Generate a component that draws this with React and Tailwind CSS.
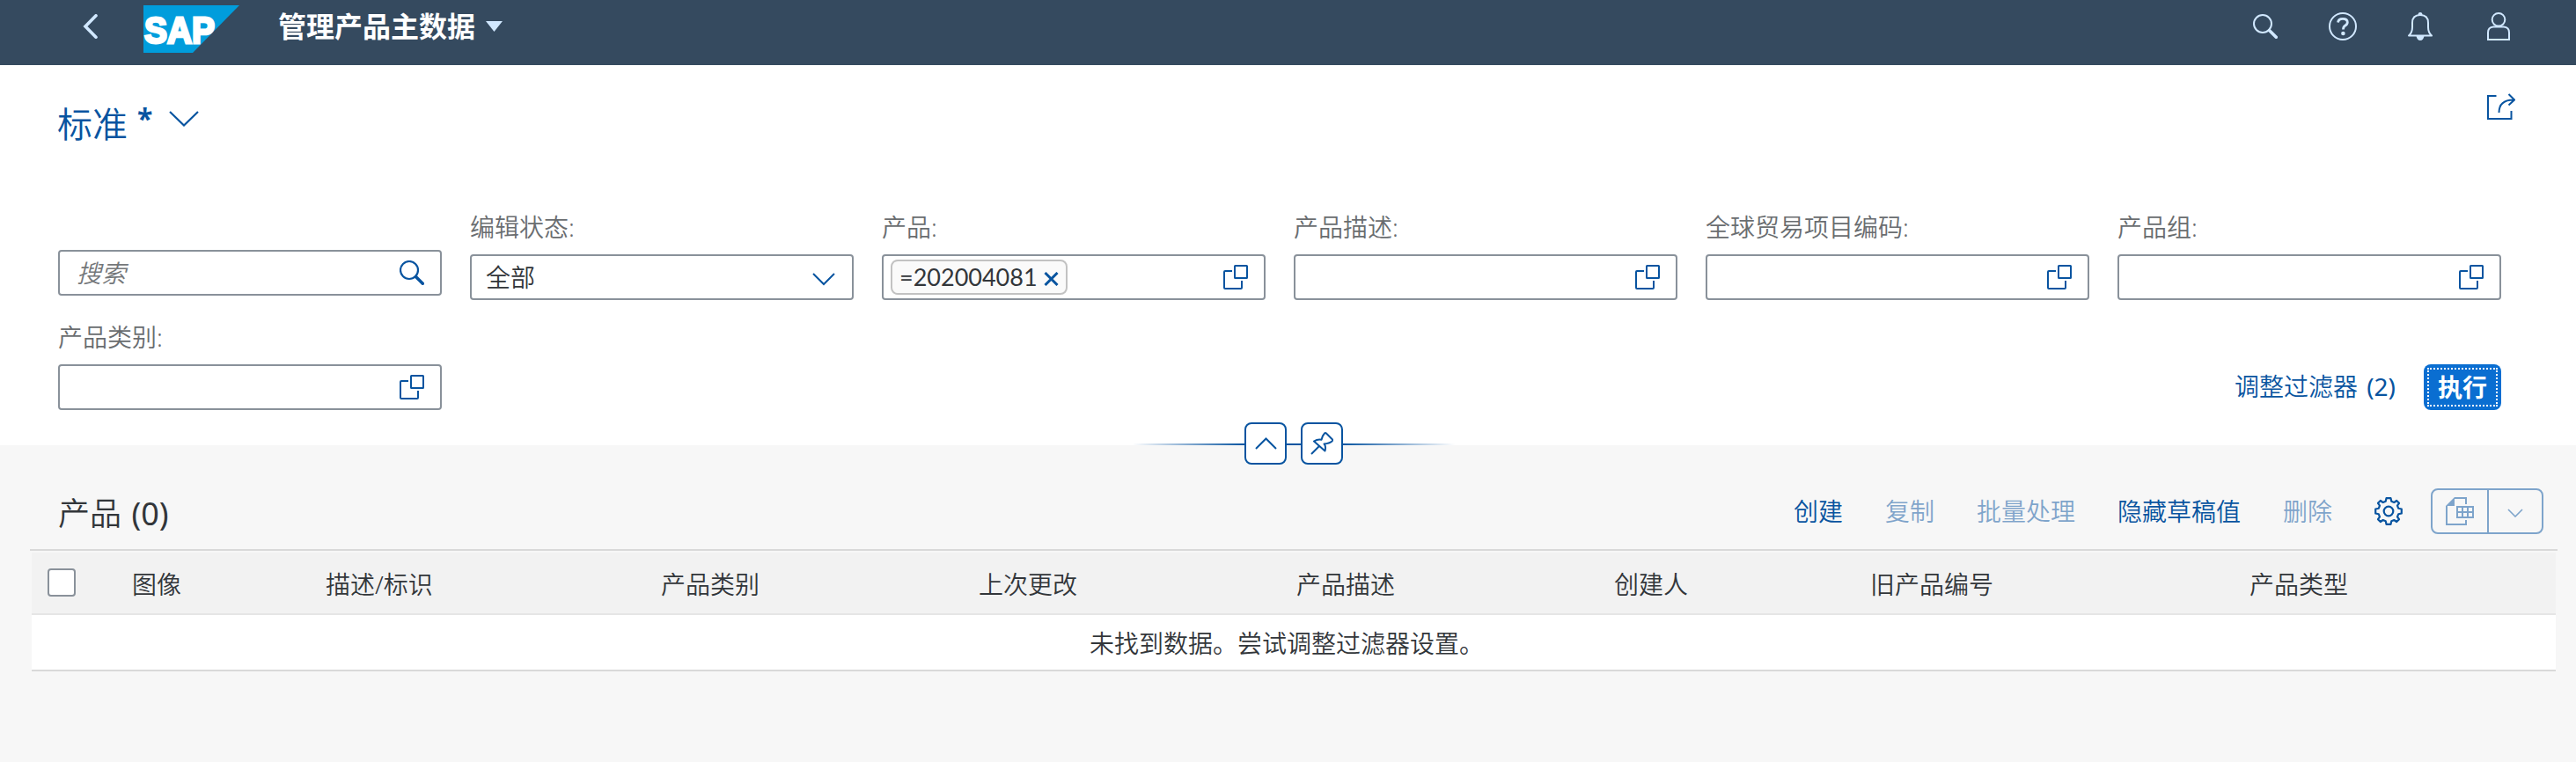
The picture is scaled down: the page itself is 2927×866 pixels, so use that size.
import clsx from 'clsx'

const FILTERS = [
  { label: '产品描述:' },
  { label: '全球贸易项目编码:' },
  { label: '产品组:' },
  { label: '产品类别:' },
]

const COLUMNS = [
  { label: '图像', width: 'w-[220px]' },
  { label: '描述/标识', width: 'w-[381px]' },
  { label: '产品类别', width: 'w-[361px]' },
  { label: '上次更改', width: 'w-[361px]' },
  { label: '产品描述', width: 'w-[361px]' },
  { label: '创建人', width: 'w-[291px]' },
  { label: '旧产品编号', width: 'w-[431px]' },
  { label: '产品类型', width: 'flex-1' },
]

const ACTIONS = [
  { label: '创建', enabled: true },
  { label: '复制', enabled: false },
  { label: '批量处理', enabled: false },
  { label: '隐藏草稿值', enabled: true },
  { label: '删除', enabled: false },
]

function Icon({ className, viewBox = '0 0 32 32', width = 2, children }) {
  return (
    <svg className={clsx('block shrink-0', className)} viewBox={viewBox} fill="none" stroke="currentColor" strokeWidth={width}>
      {children}
    </svg>
  )
}

function SearchIcon({ className, width = 2 }) {
  return (
    <Icon className={className} viewBox="0 0 28 28" width={width}>
      <circle cx="11" cy="11" r="10" />
      <path d="M18.5 18.5L26.3 26.3" strokeWidth="3.6" strokeLinecap="round" />
    </Icon>
  )
}

function ValueHelpIcon() {
  return (
    <Icon className="h-7 w-7" viewBox="0 0 28 28">
      <rect x="13" y="1" width="14" height="14" rx="0.5" />
      <path d="M10 7H2Q1 7 1 8V26Q1 27 2 27H20Q21 27 21 26V18" />
    </Icon>
  )
}

function Logo() {
  return (
    <svg className="block h-[54px] w-[109px]" viewBox="0 0 109 54">
      <path d="M0 0H109L56 54H0Z" fill="#009ddc" />
      <text x="1" y="43" textLength="80" lengthAdjust="spacingAndGlyphs" fill="#fff" stroke="#fff" strokeWidth="3"
        className="font-['Liberation_Sans'] text-[43px] font-bold">SAP</text>
    </svg>
  )
}

function ShellBar() {
  return (
    <header className="flex h-[74px] items-start bg-[#354a5f] text-[#d1e8ff]">
      <Icon className="mt-4 ml-[94px] h-7 w-[17px]" viewBox="0 0 17 28" width={3.6}>
        <path d="M15 1.8L3 14L15 26.2" strokeLinecap="round" />
      </Icon>
      <div className="mt-1.5 ml-[52px]"><Logo /></div>
      <h1 className="ml-11 flex h-[59px] items-center text-[32px] font-bold text-white">管理产品主数据</h1>
      <svg className="mt-6 ml-3 h-3 w-[19px]" viewBox="0 0 19 12" fill="currentColor"><path d="M0 0H19L9.5 12Z" /></svg>
      <div className="mt-3.5 mr-[75px] ml-auto flex items-start">
        <SearchIcon className="mt-0.5 mr-[58px] h-7 w-7" />
        <Icon className="mr-[58px] h-8 w-8">
          <circle cx="16" cy="16" r="15" />
          <path d="M10.5 11.5Q11 7.3 16 7.3Q21.3 7.3 21.3 11.2Q21.3 13.6 18.5 15.3Q16.5 16.5 16.5 19.5" strokeWidth="2.8" />
          <circle cx="16.4" cy="24" r="2.3" fill="currentColor" stroke="none" />
        </Icon>
        <Icon className="mr-[62px] h-8 w-7" viewBox="0 0 28 32">
          <path d="M1 26.5Q5 23 5 17V12Q5 3 14 3Q23 3 23 12V17Q23 23 27 26.5Z" strokeLinejoin="round" />
          <path d="M12.5 3Q12.5 1 14 1Q15.5 1 15.5 3" />
          <path d="M9.5 27Q10.5 32 14 32Q17.5 32 18.5 27Z" fill="currentColor" stroke="none" />
        </Icon>
        <Icon className="h-8 w-[26px]" viewBox="0 0 26 32">
          <circle cx="13" cy="8.3" r="7.3" />
          <path d="M1 31V23Q1 17 7 16.5H19Q25 17 25 23V31Z" />
        </Icon>
      </div>
    </header>
  )
}

function Field({ label, children }) {
  return (
    <div className="flex w-[436px] flex-col">
      <label className="h-[50px] text-[28px] leading-[38px] text-[#6a6d70]">{label}</label>
      <div className="flex h-[52px] items-center rounded-[4px] border-2 border-[#89919a] bg-white pr-[18px] text-[28px] text-[#32363a]">
        {children}
      </div>
    </div>
  )
}

function ValueHelpField({ label, children }) {
  return (
    <Field label={label}>
      {children}
      <span className="ml-auto text-[#0854a0]"><ValueHelpIcon /></span>
    </Field>
  )
}

function FilterBar() {
  return (
    <section className="h-[432px] bg-white px-[66px] text-[#0854a0]">
      <div className="flex h-[165px] items-start">
        <h2 className="mt-[37px] -ml-px text-[40px] leading-[60px]">标准</h2>
        <span className="mt-[37px] ml-[11px] w-[17px] text-[32px] leading-[48px] font-bold">*</span>
        <Icon className="mt-[52px] ml-[19px] h-[18px] w-[34px]" viewBox="0 0 34 18" width={2.2}>
          <path d="M1 1L17 16.5L33 1" />
        </Icon>
        <Icon className="mt-8 mr-[3px] ml-auto h-[30px] w-8" viewBox="0 0 32 30">
          <path d="M10.5 3H1V29H27.5V20" />
          <path d="M13.5 22Q13.5 7.5 30 7.5M24.5 1L31 7.5L24.5 13.5" />
        </Icon>
      </div>
      <div className="grid grid-cols-[repeat(6,436px)] gap-x-8 gap-y-[23px]">
        <div className="mt-[45px] flex h-[52px] items-center rounded-[4px] border-2 border-[#89919a] pr-[18px] pl-[19px]">
          <span className="pb-px text-[28px] text-[#74777a] italic">搜索</span>
          <SearchIcon className="ml-auto h-7 w-7" width={2.2} />
        </div>
        <Field label="编辑状态:">
          <span className="pb-px pl-4">全部</span>
          <Icon className="mt-1 mr-px ml-auto h-[15px] w-[26px] text-[#0854a0]" viewBox="0 0 26 15">
            <path d="M1 1L13 13L25 1" />
          </Icon>
        </Field>
        <ValueHelpField label="产品:">
          <span className="ml-2 flex h-10 w-[201px] items-center rounded-lg border-2 border-[#c2c2c2] bg-[#fafafa] pl-2">
            <span className="font-['Lato',sans-serif] text-[27px] font-normal">=202004081</span>
            <Icon className="mt-1 ml-[7px] h-4 w-[17px] text-[#0854a0]" viewBox="0 0 17 16" width={3}>
              <path d="M1.5 1L15.5 15M15.5 1L1.5 15" />
            </Icon>
          </span>
        </ValueHelpField>
        {FILTERS.map((f) => <ValueHelpField key={f.label} label={f.label} />)}
        <div className="col-span-5 mt-[50px] flex h-[52px] items-center justify-end">
          <button type="button" className="pb-0.5 text-[28px] [word-spacing:3px]">调整过滤器 <span className="font-normal">(2)</span></button>
          <button type="button" className="ml-8 flex h-[52px] w-[88px] rounded-lg bg-[#0a6ed1] p-1 text-[28px] font-bold text-white">
            <span className="flex h-full w-full items-center justify-center border-2 border-dotted border-white">执行</span>
          </button>
        </div>
      </div>
    </section>
  )
}

// Collapse and pin buttons straddle the border between the header and the content.
function HeaderHandle() {
  return (
    <div className="relative z-10 -mt-[26px] -mb-[22px] flex h-12 items-center pl-[1287px] text-[#0854a0]">
      <span className="mt-0.5 h-0.5 w-[127px] bg-linear-to-r from-transparent to-[#0854a0]" />
      <span className="flex h-12 w-12 items-center justify-center rounded-lg border-2 border-[#0854a0] bg-white">
        <Icon className="h-3.5 w-[25px]" viewBox="0 0 25 14">
          <path d="M1 13L12.5 1.5L24 13" />
        </Icon>
      </span>
      <span className="mt-0.5 h-0.5 w-4 bg-[#0854a0]" />
      <span className="flex h-12 w-12 items-center justify-center rounded-lg border-2 border-[#0854a0] bg-white">
        <Icon className="h-[26px] w-[26px]" viewBox="0 0 26 26">
          <path d="M16 1.5Q17 0.5 18 1.5L25 8.5Q25.5 9.5 24.5 10.5Q21.5 13 15.5 13.5Q18 16 16.5 21.5L4 10.5Q8 8 12.5 8.8Q13.5 4 16 1.5Z" strokeLinejoin="round" />
          <path d="M10 16L1 25" />
        </Icon>
      </span>
      <span className="mt-0.5 h-0.5 w-[127px] bg-linear-to-l from-transparent to-[#0854a0]" />
    </div>
  )
}

function Toolbar() {
  return (
    <div className="mr-3.5 ml-[30px] flex h-[118px] items-start text-[28px] text-[#0854a0]">
      <h2 className="mt-[50px] text-[36px] leading-[56px] text-[#32363a] [word-spacing:2px]">产品 <span className="font-normal">(0)</span></h2>
      <div className="mt-[49px] ml-auto flex h-[52px] items-center">
        {ACTIONS.map((a) => (
          <button key={a.label} type="button" className={clsx('mr-12 pb-px', !a.enabled && 'opacity-50')}>{a.label}</button>
        ))}
        <Icon className="mr-8 h-8 w-8" width={2.2}>
          <path d="M13.5 1.2H18.5L19.3 4.8L22.3 6L25.2 4L28 6.8L26 9.7L27.2 12.7L30.8 13.5V18.5L27.2 19.3L26 22.3L28 25.2L25.2 28L22.3 26L19.3 27.2L18.5 30.8H13.5L12.7 27.2L9.7 26L6.8 28L4 25.2L6 22.3L4.8 19.3L1.2 18.5V13.5L4.8 12.7L6 9.7L4 6.8L6.8 4L9.7 6L12.7 4.8Z" strokeLinejoin="round" />
          <circle cx="16" cy="16" r="5.3" />
        </Icon>
        <div className="flex h-[52px] w-32 items-center rounded-lg border-2 border-[#0854a0] opacity-50">
          <span className="flex h-full w-16 items-center justify-center border-r-2 border-[#0854a0]">
            <Icon className="h-8 w-8">
              <path d="M1 10V31H23V26M10 1H23V8" />
              <path d="M0 10L10 0V10Z" fill="currentColor" stroke="none" />
              <path d="M13 11H31V23H13ZM13 17H31M19 11V23M25 11V23" />
            </Icon>
          </span>
          <Icon className="mx-auto mt-1 h-2.5 w-[18px]" viewBox="0 0 18 10" width={1.6}>
            <path d="M1 1L9 9L17 1" />
          </Icon>
        </div>
      </div>
    </div>
  )
}

function ProductTable() {
  return (
    <div className="text-[28px] text-[#32363a]">
      <div className="-mr-0.5 -ml-0.5 h-0.5 bg-[#d9d9d9]" />
      <div className="mt-0.5 flex h-[71px] items-center border-b-2 border-[#e5e5e5] bg-[#f2f2f2] pl-[18px]">
        <span className="mr-16 mb-0.5 h-8 w-8 rounded-[4px] border-2 border-[#89919a] bg-white" />
        {COLUMNS.map((c) => <span key={c.label} className={clsx('pt-[3px]', c.width)}>{c.label}</span>)}
      </div>
      <div className="flex h-16 items-center justify-center border-b-2 border-[#d9d9d9] bg-white pt-0.5 pr-4">
        未找到数据。尝试调整过滤器设置。
      </div>
    </div>
  )
}

export default function App() {
  return (
    <div className="h-[866px] w-[2927px] overflow-hidden bg-[#f7f7f7] font-['Noto_Sans','Noto_Sans_CJK_SC',sans-serif] font-[350]">
      <ShellBar />
      <FilterBar />
      <HeaderHandle />
      <main className="mr-[23px] ml-9">
        <Toolbar />
        <ProductTable />
      </main>
    </div>
  )
}
